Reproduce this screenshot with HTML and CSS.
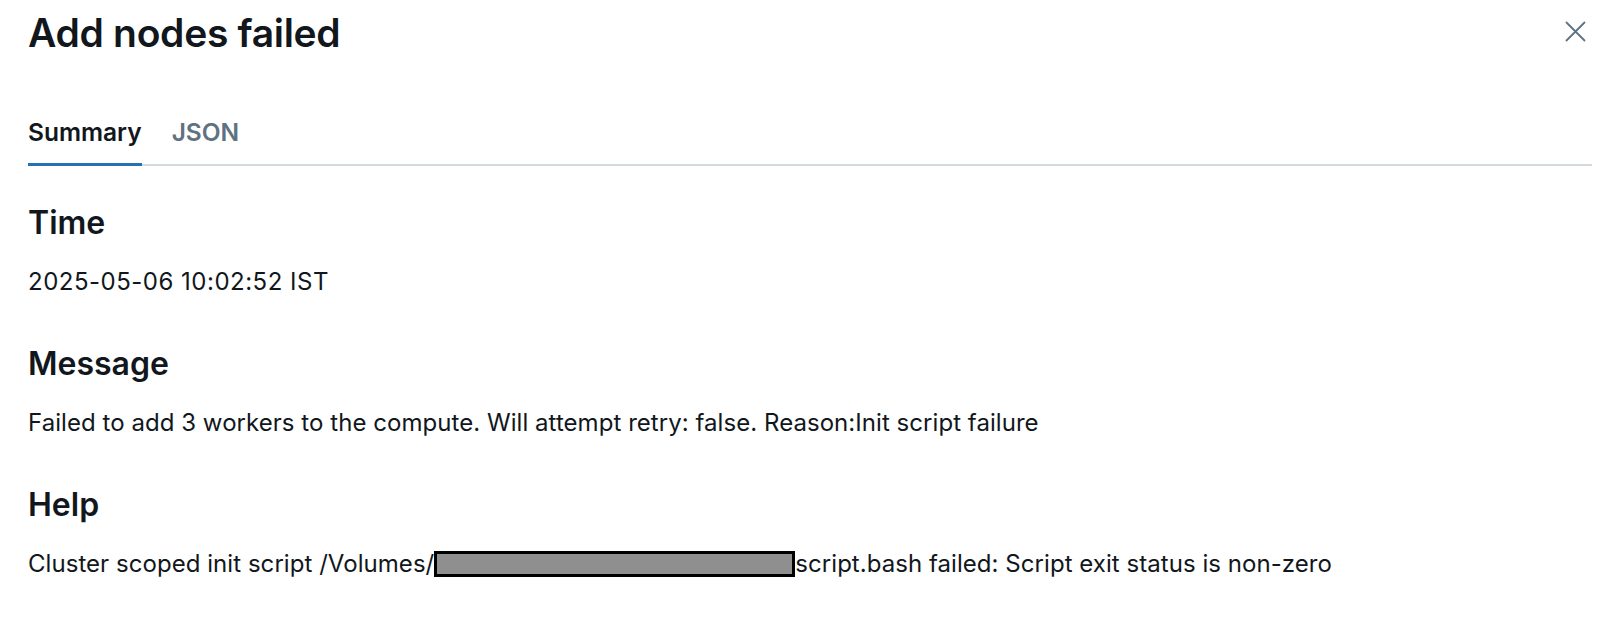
FILE: index.html
```html
<!DOCTYPE html>
<html lang="en">
<head>
<meta charset="utf-8">
<title>Add nodes failed</title>
<link rel="stylesheet" href="styles.css">
</head>
<body>
<div class="modal">
  <header class="modal-header">
    <h1 class="modal-title">Add nodes failed</h1>
    <button class="close-btn" aria-label="Close">
      <svg viewBox="0 0 21 21" width="21" height="21"><path d="M1.5 1.5 L19.5 19.5 M19.5 1.5 L1.5 19.5" stroke="#5f7281" stroke-width="1.8" fill="none" stroke-linecap="round"/></svg>
    </button>
  </header>
  <nav class="tabs">
    <div class="tab tab-active">Summary</div>
    <div class="tab">JSON</div>
  </nav>
  <section class="section">
    <h2 class="section-title">Time</h2>
    <p class="section-text time-value">2025-05-06 10:02:52 IST</p>
  </section>
  <section class="section">
    <h2 class="section-title">Message</h2>
    <p class="section-text">Failed to add 3 workers to the compute. Will attempt retry: false. Reason:Init script failure</p>
  </section>
  <section class="section">
    <h2 class="section-title">Help</h2>
    <p class="section-text">Cluster scoped init script /Volumes/<span class="redacted"></span>script.bash failed: Script exit status is non-zero</p>
  </section>
</div>
</body>
</html>
```
FILE: styles.css
```css
html, body {
  margin: 0;
  padding: 0;
  background: #ffffff;
}
body {
  font-family: Inter, "Liberation Sans", Arial, sans-serif;
  color: #11171c;
}
.modal {
  padding: 0 8px 0 28px;
}
.modal-header {
  display: flex;
  justify-content: space-between;
  align-items: flex-start;
  padding-top: 9px;
}
.modal-title {
  margin: 0;
  font-size: 39px;
  line-height: 48px;
  font-weight: 600;
  letter-spacing: -0.3px;
}
.close-btn {
  border: none;
  background: none;
  padding: 0;
  margin: 12px 6px 0 0;
  width: 21px;
  height: 21px;
}
.close-btn svg {
  display: block;
}
.tabs {
  display: flex;
  gap: 30px;
  margin-top: 60px;
  border-bottom: 2px solid #d1d9e1;
}
.tab {
  font-size: 24.5px;
  line-height: 30px;
  font-weight: 600;
  color: #5f7281;
  padding-bottom: 16px;
  margin-bottom: -2px;
  border-bottom: 3px solid transparent;
}
.tab-active {
  color: #11171c;
  border-bottom-color: #2272b4;
}
.section {
  margin-top: 37px;
}
.section + .section {
  margin-top: 46px;
}
.section-title {
  margin: 0;
  font-size: 32px;
  line-height: 40px;
  font-weight: 600;
}
.section-text {
  margin: 23px 0 0;
  font-size: 24px;
  line-height: 32px;
  letter-spacing: 0.05px;
}
.time-value {
  letter-spacing: 0.5px;
}
.redacted {
  display: inline-block;
  width: 355px;
  height: 20px;
  background: #8f8f8f;
  border: 3px solid #000;
  vertical-align: -5px;
}
```
